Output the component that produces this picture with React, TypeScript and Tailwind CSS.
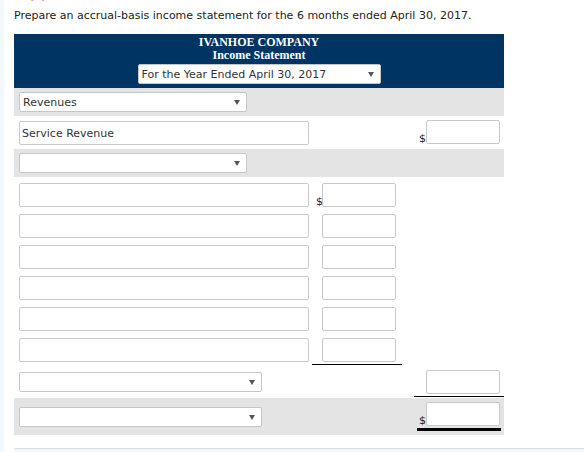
import React from "react";

const Arrow = () => (
  <svg width="6" height="5" viewBox="0 0 6 5" className="shrink-0">
    <polygon points="0,0 6,0 3,5" fill="#555" />
  </svg>
);

const Sel = ({ w, label }: { w: string; label?: string }) => (
  <div
    className={`flex h-[20px] items-center justify-between rounded-[2px] border border-[#c6c6c6] bg-white pl-[3px] pr-[6px] text-[11px] leading-none text-[#333] ${w}`}
  >
    <span>{label ?? ""}</span>
    <Arrow />
  </div>
);

const Box = ({ w, label }: { w: string; label?: string }) => (
  <div
    className={`flex h-[24px] shrink-0 items-center rounded-[2px] border border-[#c8c8c8] bg-white pl-[2px] text-[11px] leading-none text-[#333] ${w}`}
  >
    {label}
  </div>
);

const Dollar = ({ w }: { w: string }) => (
  <span className={`${w} shrink-0 text-left text-[11px] leading-none text-[#222]`}>$</span>
);

export default function App() {
  return (
    <div className="flex min-h-[452px] w-[584px] overflow-hidden bg-white font-['DejaVu_Sans',Verdana,sans-serif]">
      <div className="w-[4px] shrink-0 bg-[#f3f8fc]" />
      <div className="flex-1 pl-[10px]">
        <div className="h-[3px] overflow-hidden">
          <div className="mt-[-11px] text-[13px] leading-[13px] text-[#e8731e]">✔ (c)</div>
        </div>
        <div className="mt-[6px] text-[11px] leading-[13px] text-[#222]">
          Prepare an accrual-basis income statement for the 6 months ended April 30, 2017.
        </div>

        <div className="mt-[12px] w-[490px]">
          {/* header */}
          <div className="flex h-[54px] flex-col items-center bg-[#003462] pt-[2px] font-['Liberation_Serif',serif] text-white">
            <div className="text-[12px] font-bold leading-[13px]">IVANHOE COMPANY</div>
            <div className="text-[12px] font-bold leading-[13px]">Income Statement</div>
            <div className="mt-[2px] font-['DejaVu_Sans',Verdana,sans-serif]">
              <Sel w="w-[243px]" label="For the Year Ended April 30, 2017" />
            </div>
          </div>

          {/* Revenues */}
          <div className="h-[28px] bg-[#e4e4e4] pl-[5px] pt-[4px]">
            <Sel w="w-[228px]" label="Revenues" />
          </div>

          {/* Service Revenue */}
          <div className="flex h-[33px]">
            <div className="w-[298px] pl-[5px] pt-[5px]">
              <Box w="w-[290px]" label="Service Revenue" />
            </div>
            <div className="w-[102px]" />
            <div className="flex w-[90px] items-start pt-[4px]">
              <div className="flex items-end pl-[5px]">
                <Dollar w="w-[7px]" />
                <Box w="w-[74px]" />
              </div>
            </div>
          </div>

          {/* blank select */}
          <div className="h-[28px] bg-[#e4e4e4] pl-[5px] pt-[4px]">
            <Sel w="w-[228px]" />
          </div>

          {/* expense rows */}
          <div className="pt-[6px]">
            {[0, 1, 2, 3, 4, 5].map((i) => (
              <div key={i} className="flex h-[31px]">
                <div className="w-[298px] pl-[5px]">
                  <Box w="w-[290px]" />
                </div>
                <div className="w-[102px]">
                  <div className={`flex w-[90px] items-end ${i === 5 ? "border-b border-black pb-[2px]" : ""}`}>
                    <span className="w-[10px] shrink-0 pl-[4px] text-[11px] leading-none text-[#222]">
                      {i === 0 ? "$" : ""}
                    </span>
                    <Box w="w-[74px]" />
                  </div>
                </div>
              </div>
            ))}
          </div>

          {/* total expenses row */}
          <div className="flex h-[29px]">
            <div className="w-[298px] pl-[5px] pt-[3px]">
              <Sel w="w-[243px]" />
            </div>
            <div className="w-[102px]" />
            <div className="pt-[1px]">
              <div className="w-[90px] border-b border-black pb-[2px] pl-[12px]">
                <Box w="w-[74px]" />
              </div>
            </div>
          </div>

          {/* net income row */}
          <div className="flex h-[37px] bg-[#e4e4e4]">
            <div className="w-[298px] pl-[5px] pt-[9px]">
              <Sel w="w-[243px]" />
            </div>
            <div className="w-[102px]" />
            <div className="pt-[4px] pl-[3px]">
              <div className="flex w-[84px] items-end border-b-[3px] border-black pb-[2px]">
                <Dollar w="w-[9px] pl-[2px]" />
                <Box w="w-[74px]" />
              </div>
            </div>
          </div>
        </div>

        <div className="mt-[13px] h-[20px] border-t border-[#cfdfea] bg-[#f3f8fc]" />
      </div>
    </div>
  );
}
